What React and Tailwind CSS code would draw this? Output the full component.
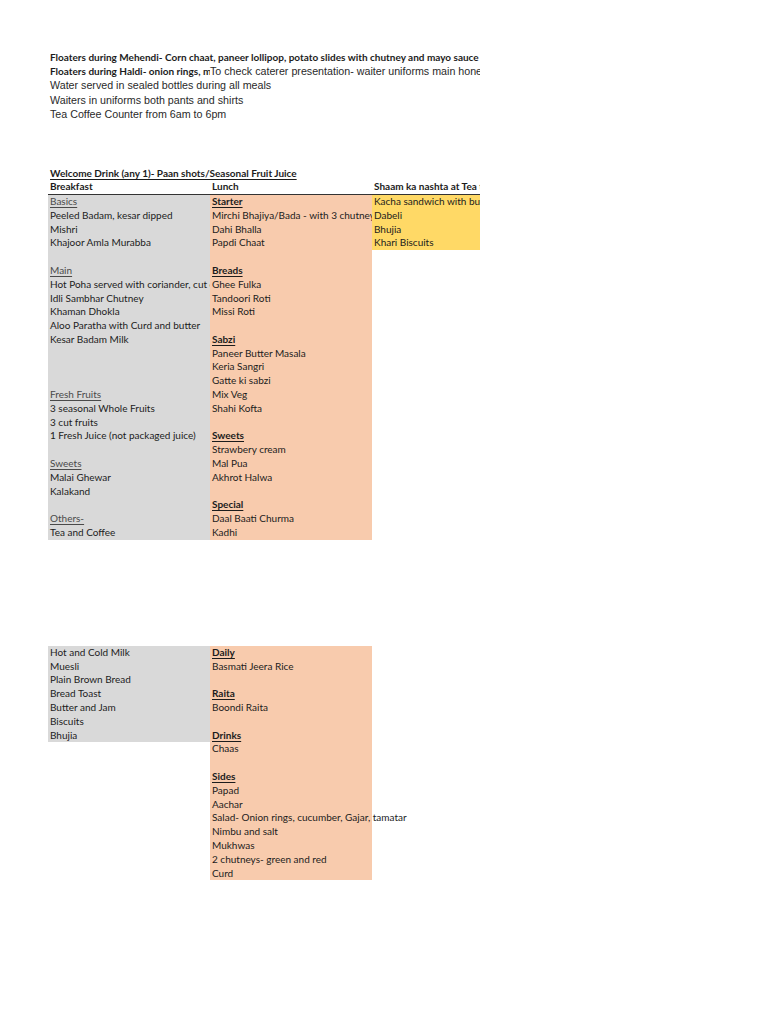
import React from "react";

const calibri = "font-['Lato','Carlito',sans-serif]";
const arial = "font-['Liberation_Sans',Arial,sans-serif]";

// cell kinds: "h" = underlined grey heading (breakfast), "b" = bold underlined heading (lunch)
const upperRows = [
  [["Basics", "h"], ["Starter", "b"], ["Kacha sandwich with butter"]],
  [["Peeled Badam, kesar dipped"], ["Mirchi Bhajiya/Bada - with 3 chutneys"], ["Dabeli"]],
  [["Mishri"], ["Dahi Bhalla"], ["Bhujia"]],
  [["Khajoor Amla Murabba"], ["Papdi Chaat"], ["Khari Biscuits"]],
  [[""], [""]],
  [["Main", "h"], ["Breads", "b"]],
  [["Hot Poha served with coriander, cut onion and sev"], ["Ghee Fulka"]],
  [["Idli Sambhar Chutney"], ["Tandoori Roti"]],
  [["Khaman Dhokla"], ["Missi Roti"]],
  [["Aloo Paratha with Curd and butter"], [""]],
  [["Kesar Badam Milk"], ["Sabzi", "b"]],
  [[""], ["Paneer Butter Masala"]],
  [[""], ["Keria Sangri"]],
  [[""], ["Gatte ki sabzi"]],
  [["Fresh Fruits", "h"], ["Mix Veg"]],
  [["3 seasonal Whole Fruits"], ["Shahi Kofta"]],
  [["3 cut fruits"], [""]],
  [["1 Fresh Juice (not packaged juice)"], ["Sweets", "b"]],
  [[""], ["Strawbery cream"]],
  [["Sweets", "h"], ["Mal Pua"]],
  [["Malai Ghewar"], ["Akhrot Halwa"]],
  [["Kalakand"], [""]],
  [[""], ["Special", "b"]],
  [["Others-", "h"], ["Daal Baati Churma"]],
  [["Tea and Coffee"], ["Kadhi"]],
];

const lowerRows = [
  [["Hot and Cold Milk"], ["Daily", "b"]],
  [["Muesli"], ["Basmati Jeera Rice"]],
  [["Plain Brown Bread"], [""]],
  [["Bread Toast"], ["Raita", "b"]],
  [["Butter and Jam"], ["Boondi Raita"]],
  [["Biscuits"], [""]],
  [["Bhujia"], ["Drinks", "b"]],
  [null, ["Chaas"]],
  [null, [""]],
  [null, ["Sides", "b"]],
  [null, ["Papad"]],
  [null, ["Aachar"]],
  [null, ["Salad- Onion rings, cucumber, Gajar, tamatar"]],
  [null, ["Nimbu and salt"]],
  [null, ["Mukhwas"]],
  [null, ["2 chutneys- green and red"]],
  [null, ["Curd"]],
];

const bgs = ["bg-[#d9d9d9]", "bg-[#f8cbad]", "bg-[#ffd966]"];

function Cell({ cell, col, clip }) {
  if (!cell) return <div className="h-[13.8px]" />;
  const [text, kind] = cell;
  let tone = "text-[#1c1c1c]";
  if (kind === "h") tone = "text-[#4a4a4a] underline underline-offset-[1.5px]";
  if (kind === "b") tone = "text-[#1c1c1c] font-bold underline underline-offset-[1.5px]";
  return (
    <div
      className={`h-[13.8px] pl-[2px] whitespace-nowrap text-[10px] leading-[13.8px] ${bgs[col]} ${tone} ${
        clip ? "overflow-hidden" : "overflow-visible"
      }`}
    >
      {text}
    </div>
  );
}

function Sheet({ rows }) {
  return (
    <div className="flex flex-col">
      {rows.map((r, i) => (
        <div key={i} className="grid grid-cols-[162px_162px_108px]">
          <Cell cell={r[0]} col={0} clip />
          <Cell cell={r[1]} col={1} clip={!!r[2]} />
          {r[2] ? <Cell cell={r[2]} col={2} clip /> : <div />}
        </div>
      ))}
    </div>
  );
}

export default function App() {
  return (
    <div className="min-h-[1024px] w-[768px] bg-white">
      <div className={`ml-[48px] w-[432px] overflow-hidden pt-[50px] ${calibri}`}>
        {/* notes on top */}
        <div className="flex flex-col text-[#1c1c1c]">
          <div className="h-[14.2px] pl-[2px] whitespace-nowrap text-[10px] font-bold leading-[14.2px]">
            Floaters during Mehendi- Corn chaat, paneer lollipop, potato slides with chutney and mayo sauce
          </div>
          <div className="grid h-[14.2px] grid-cols-[162px_270px]">
            <div className="overflow-hidden pl-[2px] whitespace-nowrap text-[10px] font-bold leading-[14.2px]">
              Floaters during Haldi- onion rings, mini pizza
            </div>
            <div className={`whitespace-nowrap text-[10.7px] leading-[14.2px] text-[#2a2a2a] ${arial}`}>
              To check caterer presentation- waiter uniforms main honey
            </div>
          </div>
          <div className={`h-[14.2px] pl-[2px] whitespace-nowrap text-[10.7px] leading-[14.2px] text-[#2a2a2a] ${arial}`}>
            Water served in sealed bottles during all meals
          </div>
          <div className={`h-[14.2px] pl-[2px] whitespace-nowrap text-[10.7px] leading-[14.2px] text-[#2a2a2a] ${arial}`}>
            Waiters in uniforms both pants and shirts
          </div>
          <div className={`h-[14.2px] pl-[2px] whitespace-nowrap text-[10.7px] leading-[14.2px] text-[#2a2a2a] ${arial}`}>
            Tea Coffee Counter from 6am to 6pm
          </div>
        </div>

        {/* menu headers */}
        <div className="mt-[45.6px] h-[13.8px] pl-[2px] whitespace-nowrap text-[10px] font-bold leading-[13.8px] text-[#1c1c1c] underline underline-offset-[1.5px]">
          Welcome Drink (any 1)- Paan shots/Seasonal Fruit Juice
        </div>
        <div className="grid h-[14.6px] grid-cols-[162px_162px_108px] border-b-[1.5px] border-[#333] text-[10px] font-bold leading-[13px] text-[#1c1c1c]">
          <div className="pl-[2px] whitespace-nowrap">Breakfast</div>
          <div className="pl-[2px] whitespace-nowrap">Lunch</div>
          <div className="overflow-hidden pl-[2px] whitespace-nowrap">Shaam ka nashta at Tea time</div>
        </div>

        <Sheet rows={upperRows} />
        <div className="h-[106px]" />
        <Sheet rows={lowerRows} />
      </div>
    </div>
  );
}
